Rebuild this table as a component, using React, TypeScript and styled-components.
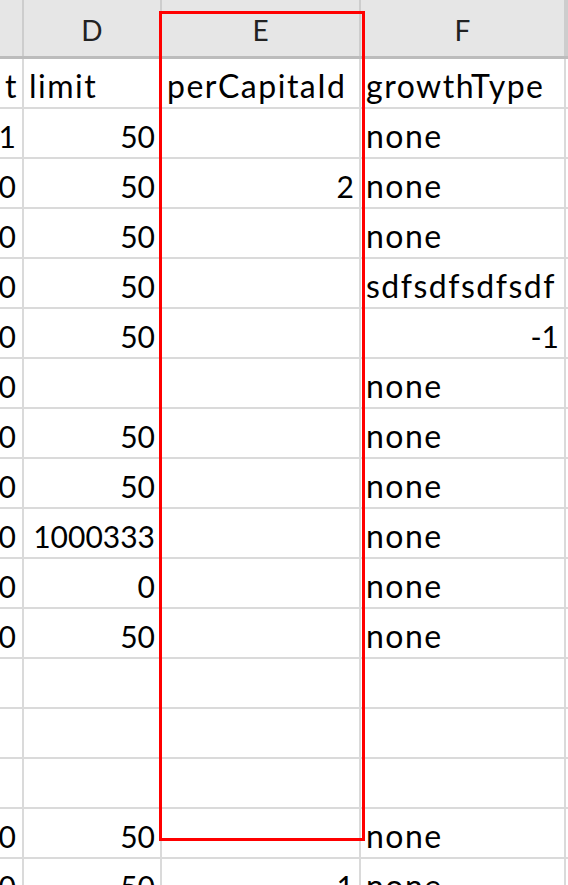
import React from "react";
import styled, { createGlobalStyle } from "styled-components";

const GlobalStyle = createGlobalStyle`
  html, body { margin: 0; padding: 0; background: #ffffff; overflow: hidden; }
  * { box-sizing: border-box; }
`;

const COLS = "24px 138px 199px 205px 1fr";

const Sheet = styled.div`
  position: relative;
  width: 568px;
  height: 885px;
  overflow: hidden;
  background: #ffffff;
  font-family: Lato, "Liberation Sans", sans-serif;
`;

const HeaderRow = styled.div`
  display: grid;
  grid-template-columns: ${COLS};
  height: 59px;
  background: #e6e6e6;
  border-bottom: 3px solid #bcbcbc;
`;

const HeaderCell = styled.div`
  display: flex;
  align-items: center;
  justify-content: center;
  border-right: 2px solid #cdcdcd;
  font-size: 28px;
  color: #222222;
  padding-top: 4px;
`;

const Row = styled.div`
  display: grid;
  grid-template-columns: ${COLS};
  height: 50px;
`;

const Cell = styled.div<{ $numeric: boolean; $edge?: boolean }>`
  display: flex;
  align-items: flex-end;
  justify-content: ${(p) => (p.$numeric ? "flex-end" : "flex-start")};
  overflow: hidden;
  white-space: nowrap;
  border-right: 2px solid #dadada;
  border-bottom: 2px solid #dadada;
  padding: 0 ${(p) => (p.$edge ? "6px" : "5px")} 5px 5px;
  font-size: ${(p) => (p.$numeric ? "30px" : "32px")};
  line-height: 32px;
  letter-spacing: ${(p) => (p.$numeric ? "0" : "1.5px")};
  color: #000000;
`;

const Highlight = styled.div`
  position: absolute;
  left: 159px;
  top: 11px;
  width: 206px;
  height: 830px;
  border: 3px solid #ff0000;
  pointer-events: none;
`;

type RowData = [string, string, string, string];

const rows: RowData[] = [
  ["t", "limit", "perCapitaId", "growthType"],
  ["1", "50", "", "none"],
  ["0", "50", "2", "none"],
  ["0", "50", "", "none"],
  ["0", "50", "", "sdfsdfsdfsdf"],
  ["0", "50", "", "-1"],
  ["0", "", "", "none"],
  ["0", "50", "", "none"],
  ["0", "50", "", "none"],
  ["0", "1000333", "", "none"],
  ["0", "0", "", "none"],
  ["0", "50", "", "none"],
  ["", "", "", ""],
  ["", "", "", ""],
  ["", "", "", ""],
  ["0", "50", "", "none"],
  ["0", "50", "1", "none"],
];

const isNum = (v: string) => /^-?\d+$/.test(v);

export default function App() {
  return (
    <>
      <GlobalStyle />
      <Sheet>
        <HeaderRow>
          <HeaderCell />
          <HeaderCell>D</HeaderCell>
          <HeaderCell>E</HeaderCell>
          <HeaderCell>F</HeaderCell>
          <HeaderCell />
        </HeaderRow>
        {rows.map((r, i) => (
          <Row key={i}>
            <Cell $numeric={i > 0} $edge>{r[0]}</Cell>
            {r.slice(1).map((v, j) => (
              <Cell key={j} $numeric={isNum(v)}>
                {v}
              </Cell>
            ))}
            <Cell $numeric={false} />
          </Row>
        ))}
        <Highlight />
      </Sheet>
    </>
  );
}
